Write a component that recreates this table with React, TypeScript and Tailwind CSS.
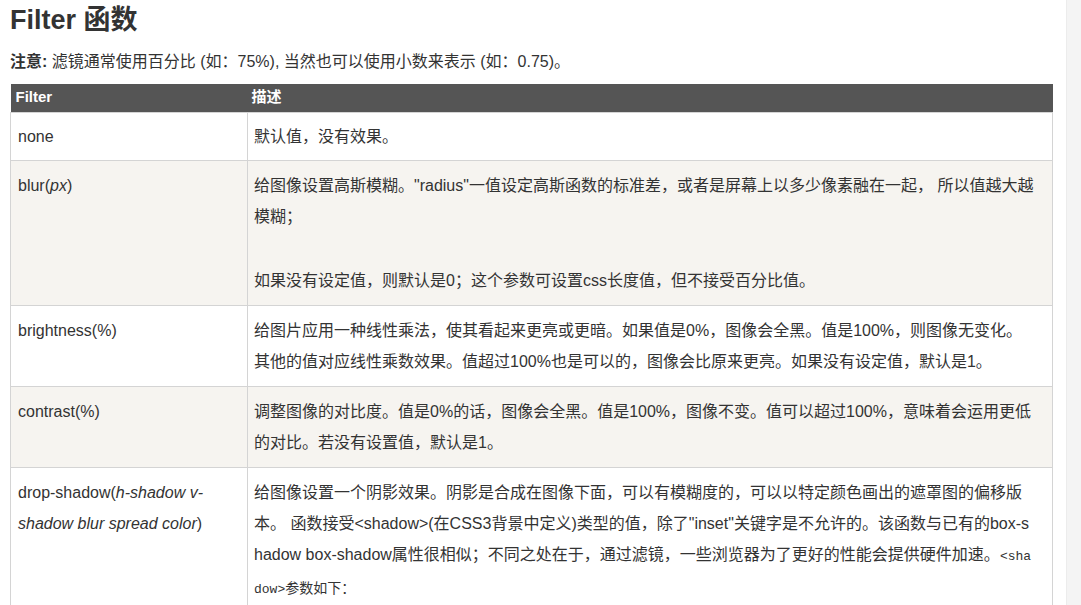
import React from 'react';

const sans = { fontFamily: '"Liberation Sans", "Noto Sans CJK SC", sans-serif' };

const Code: React.FC<{ children: React.ReactNode }> = ({ children }) => (
  <span className="text-[13px]" style={{ fontFamily: '"Liberation Mono", "Noto Sans CJK SC", monospace' }}>
    {children}
  </span>
);

const Line: React.FC<{ children: React.ReactNode }> = ({ children }) => (
  <span className="block whitespace-nowrap">{children}</span>
);

const App: React.FC = () => {
  return (
    <div className="flex w-[1081px] h-[605px] overflow-hidden bg-white text-[#333]" style={sans}>
      <div className="flex-1 pl-[10px]">
        <h1 className="text-[27px] font-bold leading-[40px] text-[#333]">Filter 函数</h1>

        <p className="mt-[10px] text-[16px] leading-[24px]">
          <strong>注意:</strong> 滤镜通常使用百分比 (如：75%), 当然也可以使用小数来表示 (如：0.75)。
        </p>

        <table className="mt-[10px] w-[1043px] table-fixed border-collapse text-[16px]">
          <colgroup>
            <col className="w-[237px]" />
            <col />
          </colgroup>
          <thead>
            <tr className="bg-[#555] text-white">
              <th className="h-[28px] px-[5px] pt-[3px] text-left align-top text-[15px] font-bold leading-[20px]">Filter</th>
              <th className="h-[28px] px-[4px] pt-[3px] text-left align-top text-[15px] font-bold leading-[20px]">描述</th>
            </tr>
          </thead>
          <tbody className="leading-[31px]">
            <tr className="bg-white">
              <td className="border border-[#d4d4d4] px-[7px] py-[8px] align-top">none</td>
              <td className="border border-[#d4d4d4] px-[6px] py-[8px] align-top">默认值，没有效果。</td>
            </tr>
            <tr className="bg-[#f6f4f0]">
              <td className="border border-[#d4d4d4] px-[7px] py-[9px] align-top">
                blur(<em>px</em>)
              </td>
              <td className="border border-[#d4d4d4] px-[6px] py-[9px] align-top">
                <Line>给图像设置高斯模糊。"radius"一值设定高斯函数的标准差，或者是屏幕上以多少像素融在一起， 所以值越大越</Line>
                <Line>模糊；</Line>
                <span className="block h-[33px]" />
                <Line>如果没有设定值，则默认是0；这个参数可设置css长度值，但不接受百分比值。</Line>
              </td>
            </tr>
            <tr className="bg-white">
              <td className="border border-[#d4d4d4] px-[7px] py-[9px] align-top">brightness(%)</td>
              <td className="border border-[#d4d4d4] px-[6px] py-[9px] align-top">
                <Line>给图片应用一种线性乘法，使其看起来更亮或更暗。如果值是0%，图像会全黑。值是100%，则图像无变化。</Line>
                <Line>其他的值对应线性乘数效果。值超过100%也是可以的，图像会比原来更亮。如果没有设定值，默认是1。</Line>
              </td>
            </tr>
            <tr className="bg-[#f6f4f0]">
              <td className="border border-[#d4d4d4] px-[7px] py-[9px] align-top">contrast(%)</td>
              <td className="border border-[#d4d4d4] px-[6px] py-[9px] align-top">
                <Line>调整图像的对比度。值是0%的话，图像会全黑。值是100%，图像不变。值可以超过100%，意味着会运用更低</Line>
                <Line>的对比。若没有设置值，默认是1。</Line>
              </td>
            </tr>
            <tr className="bg-white">
              <td className="border border-[#d4d4d4] px-[7px] py-[9px] align-top">
                <Line>
                  drop-shadow(<em>h-shadow v-</em>
                </Line>
                <Line>
                  <em>shadow blur spread color</em>)
                </Line>
              </td>
              <td className="border border-[#d4d4d4] px-[6px] py-[9px] align-top">
                <Line>给图像设置一个阴影效果。阴影是合成在图像下面，可以有模糊度的，可以以特定颜色画出的遮罩图的偏移版</Line>
                <Line>本。 函数接受&lt;shadow&gt;(在CSS3背景中定义)类型的值，除了"inset"关键字是不允许的。该函数与已有的box-s</Line>
                <Line>
                  hadow box-shadow属性很相似；不同之处在于，通过滤镜，一些浏览器为了更好的性能会提供硬件加速。<Code>&lt;sha</Code>
                </Line>
                <Line>
                  <Code>dow&gt;</Code>
                  <span className="text-[14px]">参数如下：</span>
                </Line>
              </td>
            </tr>
          </tbody>
        </table>
      </div>
      <div className="w-[15px] shrink-0 border-l border-[#ececec] bg-[#f4f4f4]" />
    </div>
  );
};

export default App;
